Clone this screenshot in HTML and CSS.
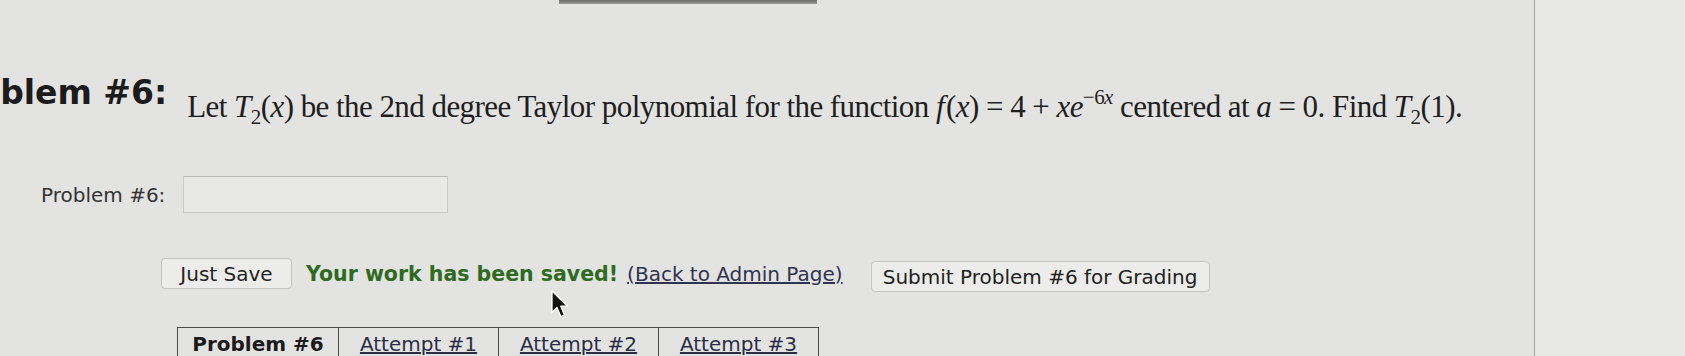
FILE: index.html
```html
<!DOCTYPE html>
<html>
  <head>
    <title>Problem 6</title>
    <link rel="stylesheet" href="styles.css">
  </head>
  <body>
    <div class="screen">
      <div class="page">
        <div class="top-edge"></div>

        <div class="problem">
          <h2 class="problem-num">Problem #6:</h2>
          <div class="problem-text">
            Let <i>T</i><sub>2</sub>(<i>x</i>) be the 2nd degree Taylor polynomial for the function
            <i>f</i>&#8202;(<i>x</i>) = 4 + <i>xe</i><sup>&minus;6<i>x</i></sup> centered at <i>a</i> = 0. Find <i>T</i><sub>2</sub>(1).
          </div>
        </div>

        <div class="answer-row">
          <label class="answer-label">Problem #6:</label>
          <input class="answer" type="text">
        </div>

        <div class="actions">
          <button class="btn btn-save">Just Save</button>
          <span class="saved">Your work has been saved!</span>
          <a class="admin-link" href="#">(Back to Admin Page)</a>
          <button class="btn btn-submit">Submit Problem #6 for Grading</button>
        </div>

        <table class="attempts">
          <tr>
            <th>Problem #6</th>
            <td><a href="#">Attempt #1</a></td>
            <td><a href="#">Attempt #2</a></td>
            <td><a href="#">Attempt #3</a></td>
          </tr>
        </table>

        <!-- mouse pointer -->
        <svg class="pointer" width="18" height="30" viewBox="0 0 18 30">
          <path d="M1 1 L1 22.5 L6 17.5 L9.8 26.5 L13.4 25 L9.8 16.2 L16.5 16.2 Z" fill="#111" stroke="#fff" stroke-width="1.3" stroke-linejoin="round"/>
        </svg>
      </div>
      <div class="side"></div>
    </div>
  </body>
</html>
```

FILE: styles.css
```css
html, body{
  margin: 0;
  padding: 0;
  background: #e4e4e2;
  overflow: hidden;
}

.screen{
  display: flex;
  width: 1685px;
  height: 356px;
}

.page{
  position: relative;
  flex: 0 0 1534px;
  height: 356px;
  overflow: hidden;
  border-right: 1px solid #a3a3a1;
  background: #e3e3e1;
  font-family: "DejaVu Sans", Verdana, sans-serif;
  color: #222;
}

.side{
  flex: 1;
  background: #e7e7e6;
}

/**** top edge of the box above ****/
.top-edge{
  width: 258px;
  height: 4px;
  margin-left: 559px;
  background: linear-gradient(#6c6c6a, #9a9a98);
}

/**** problem statement ****/
.problem{
  display: flex;
  align-items: flex-start;
  margin-top: 69px;
}
.problem-num{
  margin: 0 0 0 -63px;
  font-size: 33px;
  font-weight: bold;
  line-height: 40px;
  color: #1b1b1b;
  white-space: nowrap;
}
.problem-text{
  margin-left: 20px;
  padding-top: 14px;
  font-family: "Liberation Serif", "Times New Roman", serif;
  font-size: 31px;
  letter-spacing: -0.55px;
  line-height: 40px;
  color: #1e1e1e;
  white-space: nowrap;
}
.problem-text sub,
.problem-text sup{
  font-size: 21px;
  line-height: 0;
}
.problem-text sub{
  vertical-align: -7px;
}
.problem-text sup{
  vertical-align: 13px;
}

/**** answer ****/
.answer-row{
  display: flex;
  align-items: center;
  margin-top: 49px;
  padding-left: 41px;
}
.answer-label{
  width: 142px;
  font-size: 20px;
  color: #333;
}
.answer{
  box-sizing: border-box;
  width: 265px;
  height: 37px;
  margin: 0;
  border: 1px solid #c9c9c7;
  border-top-color: #b9b9b7;
  background: #e8e8e6;
}

/**** buttons ****/
.actions{
  display: flex;
  align-items: center;
  margin-top: 45px;
  padding-left: 161px;
  font-size: 20px;
}
.btn{
  height: 31px;
  padding: 0;
  border: 1px solid #c4c4c2;
  border-radius: 4px;
  background: #ececea;
  font-family: "DejaVu Sans", Verdana, sans-serif;
  font-size: 20px;
  color: #222;
  white-space: nowrap;
}
.btn-save{
  width: 131px;
}
.saved{
  margin-left: 14px;
  font-size: 20.5px;
  font-weight: bold;
  color: #2e6a1f;
}
.admin-link{
  margin-left: 9px;
  color: #2f3350;
}
.btn-submit{
  margin-left: 28px;
  width: 339px;
  position: relative;
  top: 3px;
}

/**** attempts table ****/
.attempts{
  margin: 38px 0 0 177px;
  border-collapse: collapse;
  font-size: 20px;
}
.attempts th,
.attempts td{
  height: 40px;
  padding: 4px 10px 0;
  border: 1px solid #4c4c4a;
  text-align: center;
  vertical-align: top;
  box-sizing: border-box;
}
.attempts th{
  width: 161px;
  color: #1a1a1a;
}
.attempts td{
  width: 160px;
}
.attempts a{
  color: #2b2d44;
}

.pointer{
  position: absolute;
  left: 551px;
  top: 290px;
}
```
